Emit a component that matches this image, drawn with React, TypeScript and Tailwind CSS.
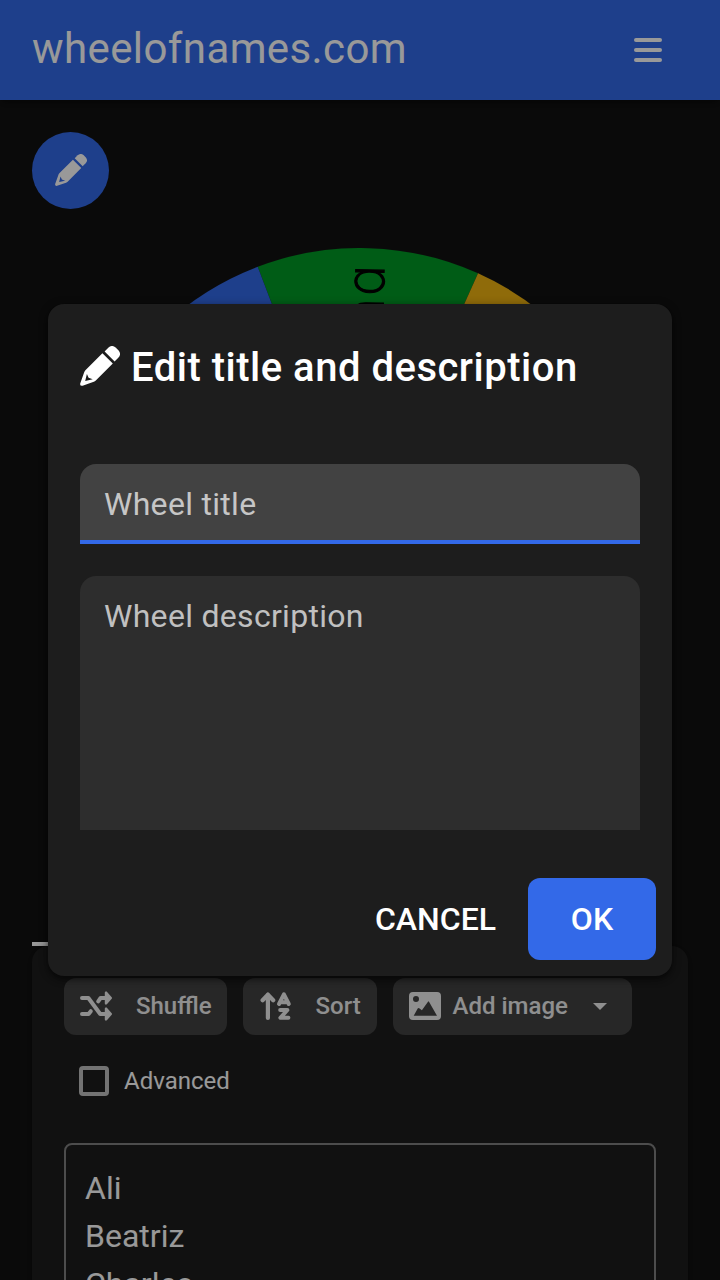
import React from 'react';

const names = ['Ali', 'Beatriz', 'Charles', 'Diya', 'Eric', 'Fatima', 'Gabriel', 'Hanna'];
const sliceColors = ['#009925', '#eeb211', '#d50f25', '#3369e8', '#009925', '#eeb211', '#d50f25', '#3369e8'];

const RADIUS = 288;
const START_ANGLE = -20.8;

const pointAt = (deg: number) => {
  const rad = (deg * Math.PI) / 180;
  return `${RADIUS + RADIUS * Math.sin(rad)} ${RADIUS - RADIUS * Math.cos(rad)}`;
};

const PencilIcon: React.FC<{ className: string }> = ({ className }) => (
  <svg viewBox="0 0 40 40" className={className} fill="currentColor">
    <path
      fillRule="evenodd"
      d="M22.4 7.2L5.4 24.2Q4.6 25 4.2 26.2L.2 37.4Q-.3 40.3 2.6 39.8L13.8 35.8Q15 35.4 15.8 34.6L32.8 17.6ZM6.9 28L8.6 31.8L12.7 33.3L5.2 34.9Z"
    />
    <path d="M24.6 5.4L28.3 1.7Q31.8-1.6 35.6 1.4L38.6 4.4Q41.6 8.2 38.3 11.7L34.6 15.4Z" />
  </svg>
);

const ShuffleIcon: React.FC = () => (
  <svg viewBox="0 0 32 32" className="size-8" fill="none" stroke="currentColor" strokeWidth="4" strokeLinecap="round" strokeLinejoin="round">
    <path d="M2 8H8.4L20.2 24H25" />
    <path d="M18.2 11.4L20.6 8H25" />
    <path d="M2 24H8.6L10.8 21.2" />
    <path fill="currentColor" strokeWidth="2.4" d="M26 2.6V13.4L30.8 8ZM26 18.6V29.4L30.8 24Z" />
  </svg>
);

const SortIcon: React.FC = () => (
  <svg viewBox="0 0 32 32" className="size-8" fill="none" stroke="currentColor" strokeWidth="4.2" strokeLinecap="round" strokeLinejoin="round">
    <path d="M7.9 28V4.5M2.6 10.2L7.9 4.6L13.2 10.2" />
    <path strokeWidth="4" d="M19 14L23.9 4.4L28.8 14M20.8 12.2H27" />
    <path strokeWidth="4" d="M20.2 20H27.4L20.4 27.8H28.4" />
  </svg>
);

const ImageIcon: React.FC = () => (
  <svg viewBox="0 0 32 32" className="size-8" fill="currentColor">
    <path
      fillRule="evenodd"
      d="M4 2H28Q32 2 32 6V26Q32 30 28 30H4Q0 30 0 26V6Q0 2 4 2ZM7 6A3 3 0 1 0 7 12A3 3 0 1 0 7 6ZM19 11.7L12.9 20.3L10.2 18.2Q9.3 17.5 8.7 18.5L4.7 25.8H28L20 11.7Q19.5 11 19 11.7Z"
    />
  </svg>
);

const Wheel: React.FC = () => (
  <svg viewBox="0 0 576 576" className="mx-auto mt-[39px] block size-[576px]">
    {names.map((name, i) => {
      const from = START_ANGLE + i * 45;
      return (
        <path
          key={name}
          fill={sliceColors[i]}
          d={`M${RADIUS} ${RADIUS}L${pointAt(from)}A${RADIUS} ${RADIUS} 0 0 1 ${pointAt(from + 45)}Z`}
        />
      );
    })}
    <text
      transform="translate(288 288) rotate(-88.7)"
      x="269"
      y="18.2"
      textAnchor="end"
      fontSize="52"
      letterSpacing="-1.5"
      stroke="black"
      strokeWidth="1.2"
      className="font-['DejaVu_Sans',sans-serif] font-extralight"
    >
      Hannɑ
    </text>
  </svg>
);

interface ToolButtonProps {
  className: string;
  children: React.ReactNode;
}

const ToolButton: React.FC<ToolButtonProps> = ({ className, children }) => (
  <button
    className={`flex h-[57px] items-center rounded-xl bg-[#424242] pb-[2px] text-2xl font-medium text-[#eeeeee] ${className}`}
  >
    {children}
  </button>
);

const EntriesPanel: React.FC = () => (
  <section className="mx-8 mt-[118px]">
    <div className="h-1 w-1/2 bg-white" />
    <div className="h-[420px] rounded-2xl bg-[#1d1d1d] px-8 pt-8 shadow-[0_2px_10px_rgba(0,0,0,0.4)]">
      <div className="flex gap-4">
        <ToolButton className="w-[163px] gap-6 pl-4">
          <ShuffleIcon />
          Shuffle
        </ToolButton>
        <ToolButton className="w-[134px] gap-6 pl-[16.5px]">
          <SortIcon />
          Sort
        </ToolButton>
        <ToolButton className="w-[239px] gap-3 pl-[15.5px]">
          <ImageIcon />
          Add image
          <span className="mt-[2px] ml-[13.5px] border-x-[7px] border-t-[7px] border-x-transparent border-t-[#eeeeee]" />
        </ToolButton>
      </div>
      <label className="mt-[31px] ml-[15px] flex h-[30px] items-center gap-[15px] text-2xl text-white">
        <span className="size-[30px] rounded border-4 border-[#c0c0c0]" />
        Advanced
      </label>
      <div className="mt-[47px] h-[300px] rounded-lg border-2 border-[#808080] px-[19px] pt-[19px] text-[32px] leading-[48px] text-white">
        {names.map((name) => (
          <div key={name}>{name}</div>
        ))}
      </div>
    </div>
  </section>
);

const EditDialog: React.FC = () => (
  <div className="absolute inset-0 flex items-center justify-center bg-black/40">
    <div className="flex h-[672px] w-[624px] flex-col rounded-2xl bg-[#1d1d1d] text-white shadow-[0_2px_10px_rgba(0,0,0,0.4),0_4px_4px_rgba(0,0,0,0.28)]">
      <h2 className="flex h-32 items-center gap-[11px] px-8 text-[40px] font-medium tracking-[0.0125em]">
        <PencilIcon className="mb-1 size-10 shrink-0" />
        Edit title and description
      </h2>
      <div className="mt-8 flex flex-col gap-8 px-8">
        <div className="h-20 rounded-t-2xl border-b-4 border-[#3369e8] bg-[#424242] px-6 text-[32px] leading-[80px] tracking-[0.00937em] text-[#c6c6c6]">
          Wheel title
        </div>
        <div className="h-[254px] rounded-t-2xl bg-[#2d2d2d] px-6 text-[32px] leading-[80px] tracking-[0.00937em] text-[#c0c0c0]">
          Wheel description
        </div>
      </div>
      <div className="mt-auto flex justify-end p-4 text-[32px] font-medium">
        <button className="h-[82px] px-8">CANCEL</button>
        <button className="h-[82px] w-32 rounded-xl bg-[#3369e8]">OK</button>
      </div>
    </div>
  </div>
);

const App: React.FC = () => (
  <div className="relative h-[1280px] w-[720px] overflow-hidden bg-[#121212] font-[Roboto,sans-serif]">
    <header className="relative flex h-[100px] items-center justify-between bg-[#3369e8] pr-[58px] pl-8 text-white shadow-[0_2px_10px_rgba(0,0,0,0.5)]">
      <h1 className="pb-1 text-[42px] tracking-[0.0095em]">wheelofnames.com</h1>
      <button className="flex w-7 flex-col gap-[6px]">
        <span className="h-1 rounded-full bg-white" />
        <span className="h-1 rounded-full bg-white" />
        <span className="h-1 rounded-full bg-white" />
      </button>
    </header>
    <main>
      <button className="mt-8 ml-8 flex size-[77px] items-center justify-center rounded-full bg-[#3369e8] pb-px text-white">
        <PencilIcon className="size-8" />
      </button>
      <Wheel />
      <EntriesPanel />
    </main>
    <EditDialog />
  </div>
);

export default App;
